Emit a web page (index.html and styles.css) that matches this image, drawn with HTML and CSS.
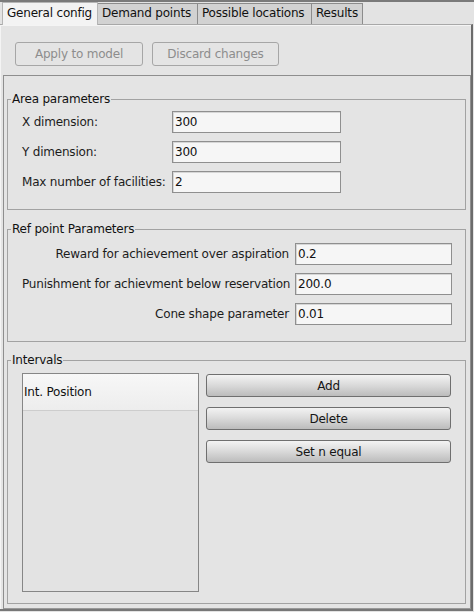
FILE: index.html
```html
<!DOCTYPE html>
<html>
<head>
<meta charset="utf-8">
<link rel="stylesheet" href="styles.css">
</head>
<body>
<div class="window">
  <div class="tabs">
    <div class="tab tab-selected">General config</div>
    <div class="tab tab-demand">Demand points</div>
    <div class="tab tab-possible">Possible locations</div>
    <div class="tab tab-results">Results</div>
  </div>
  <div class="pane">
    <div class="toolbar">
      <button class="btn btn-disabled btn-apply" disabled>Apply to model</button>
      <button class="btn btn-disabled btn-discard" disabled>Discard changes</button>
    </div>
    <div class="panel">
      <fieldset class="group group-area">
        <legend class="legend">Area parameters</legend>
        <div class="form form-area">
          <label class="label">X dimension:</label>
          <input class="field" type="text" value="300">
          <label class="label">Y dimension:</label>
          <input class="field" type="text" value="300">
          <label class="label">Max number of facilities:</label>
          <input class="field" type="text" value="2">
        </div>
      </fieldset>
      <fieldset class="group group-ref">
        <legend class="legend">Ref point Parameters</legend>
        <div class="form form-ref">
          <label class="label label-right">Reward for achievement over aspiration</label>
          <input class="field" type="text" value="0.2">
          <label class="label label-right">Punishment for achievment below reservation</label>
          <input class="field" type="text" value="200.0">
          <label class="label label-right">Cone shape parameter</label>
          <input class="field" type="text" value="0.01">
        </div>
      </fieldset>
      <fieldset class="group group-intervals">
        <legend class="legend">Intervals</legend>
        <div class="intervals">
          <div class="list">
            <div class="list-header">Int. Position</div>
          </div>
          <div class="actions">
            <button class="btn btn-action">Add</button>
            <button class="btn btn-action">Delete</button>
            <button class="btn btn-action">Set n equal</button>
          </div>
        </div>
      </fieldset>
    </div>
  </div>
</div>
</body>
</html>
```
FILE: styles.css
```css
* {
  box-sizing: border-box;
}

html, body {
  margin: 0;
  padding: 0;
  background: #e3e3e3;
}

body {
  font-family: "DejaVu Sans", "Liberation Sans", sans-serif;
  font-size: 12px;
  letter-spacing: -0.2px;
  color: #1a1a1a;
}

.window {
  width: 474px;
  height: 612px;
  border-top: 2px solid #7a7a7a;
  background: #e3e3e3;
  display: flex;
  flex-direction: column;
  overflow: hidden;
}

/* ---------- tabs ---------- */
.tabs {
  display: flex;
  align-items: flex-end;
  height: 23px;
  padding-left: 2px;
}

.tab {
  height: 21px;
  line-height: 19px;
  padding-left: 4px;
  border: 1px solid #8c8c8c;
  border-bottom: none;
  margin-left: -1px;
  background: #d2d2d2;
  color: #111;
  white-space: nowrap;
}

.tab-selected {
  height: 23px;
  line-height: 21px;
  margin-left: 0;
  width: 96px;
  background: #f3f3f3;
  border-color: #b5b5b5;
  margin-bottom: -1px;
  position: relative;
  z-index: 1;
}

.tab-demand { width: 101px; }
.tab-possible { width: 115px; }
.tab-results { width: 52px; }

/* ---------- pane ---------- */
.pane {
  flex: 1;
  width: 473px;
  border-top: 1px solid #a8a8a8;
  border-right: 2px solid #6b6b6b;
  border-bottom: 2px solid #777;
  background: #e4e4e4;
  display: flex;
  flex-direction: column;
  box-shadow: inset 1px 1px 0 #f4f4f4;
  margin-bottom: 1px;
}

.toolbar {
  display: flex;
  gap: 9px;
  height: 50px;
  padding: 17px 0 0 15px;
}

.btn {
  font-family: inherit;
  font-size: 12px;
  letter-spacing: -0.2px;
  height: 24px;
  padding: 0;
  border-radius: 3px;
  text-align: center;
}

.btn-disabled {
  border: 1px solid #a6a6a6;
  background: #e4e4e4;
  color: #8d8d8d;
}

.btn-apply { width: 128px; }
.btn-discard { width: 127px; }

.btn-action {
  width: 245px;
  height: 23px;
  border: 1px solid #6f6f6f;
  background: linear-gradient(#f3f3f3, #dcdcdc 45%, #bcbcbc);
  color: #151515;
}

/* ---------- main panel ---------- */
.panel {
  flex: 1;
  margin-left: 3px;
  width: 468px;
  border: 1px solid #8e8e8e;
  border-bottom-color: #999;
  padding: 16px 4px 4px 3px;
  display: flex;
  flex-direction: column;
}

.group {
  margin: 0;
  border: 1px solid #a2a2a2;
  padding: 0 0 16px 0;
  min-width: 0;
}

.group-ref {
  margin-top: 12px;
}

.group-intervals {
  margin-top: 11px;
  flex: 1;
  padding-bottom: 11px;
}

.legend {
  padding: 0 1px;
  margin-left: 3px;
  line-height: 14px;
  color: #111;
}

.form {
  display: grid;
  row-gap: 8px;
  align-items: center;
  padding-left: 14px;
}

.form-area {
  padding-top: 5px;
  grid-template-columns: 150px 169px;
}

.form-ref {
  padding-top: 7px;
  grid-template-columns: 267px 157px;
  column-gap: 6px;
}

.label {
  color: #1c1c1c;
  white-space: nowrap;
}

.label-right {
  text-align: right;
}

.field {
  height: 22px;
  width: 100%;
  margin: 0;
  border: 1px solid #8f8f8f;
  background: #f6f6f6;
  box-shadow: inset 1px 1px 0 #d6d6d6;
  font-family: inherit;
  font-size: 12px;
  letter-spacing: -0.2px;
  color: #111;
  padding: 0 2px;
}

/* ---------- intervals ---------- */
.intervals {
  display: flex;
  gap: 7px;
  padding-top: 6px;
  padding-left: 14px;
}

.list {
  width: 177px;
  height: 219px;
  border: 1px solid #868686;
  background: #e3e3e3;
}

.list-header {
  height: 37px;
  line-height: 36px;
  padding-left: 1px;
  background: linear-gradient(#f7f7f7, #ededed);
  border-bottom: 1px solid #cdcdcd;
  color: #111;
}

.actions {
  display: flex;
  flex-direction: column;
  gap: 10px;
  padding-top: 1px;
}
```
